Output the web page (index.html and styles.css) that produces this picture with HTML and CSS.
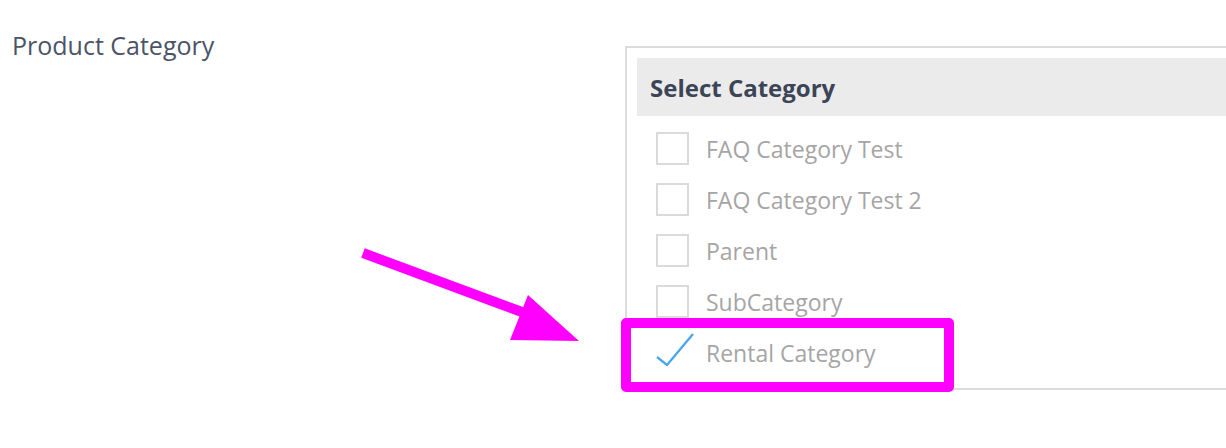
FILE: index.html
```html
<!DOCTYPE html>
<html lang="en">
<head>
  <meta charset="UTF-8">
  <title>Product Category</title>
  <link rel="stylesheet" href="styles.css">
</head>
<body>
  <div class="page">
    <div class="field">
      <label class="field-label">Product Category</label>

      <div class="category-box">
        <div class="category-head">Select Category</div>
        <ul class="category-list">
          <li class="category-item"><span class="check"></span>FAQ Category Test</li>
          <li class="category-item"><span class="check"></span>FAQ Category Test 2</li>
          <li class="category-item"><span class="check"></span>Parent</li>
          <li class="category-item"><span class="check"></span>SubCategory</li>
          <li class="category-item checked">
            <span class="check">
              <svg width="38" height="34" viewBox="0 0 38 34">
                <polyline points="1,25 11,33 37,2" fill="none" stroke="#4aa6ec" stroke-width="2.3"/>
              </svg>
            </span>Rental Category
          </li>
        </ul>
      </div>
    </div>

    <!-- callout -->
    <svg class="callout-arrow" width="240" height="100" viewBox="0 0 240 100">
      <line x1="3" y1="12" x2="170" y2="74" stroke="#ff00ff" stroke-width="10"/>
      <polygon points="168,54 150,99 219,100" fill="#ff00ff"/>
    </svg>
    <div class="callout-box"></div>
  </div>
</body>
</html>
```

FILE: styles.css
```css
body {
  margin: 0;
  background: #fff;
  font-family: "Open Sans", Arial, sans-serif;
}

.page {
  position: relative;
  height: 448px;
}

.field {
  display: flex;
  align-items: flex-start;
  padding-top: 28px;
}

.field-label {
  width: 625px;
  flex-shrink: 0;
  padding-left: 12px;
  box-sizing: border-box;
  font-size: 25px;
  color: #4b5467;
  line-height: 34px;
}

.category-box {
  flex: 1;
  margin-top: 18px;
  border: 2px solid #dcdcdc;
  border-right: none;
  padding: 10px 0 10px 10px;
}

.category-head {
  height: 58px;
  display: flex;
  align-items: center;
  padding-left: 13px;
  background: #ebebeb;
  font-size: 24px;
  font-weight: 700;
  color: #3b4556;
}

.category-list {
  list-style: none;
  margin: 0;
  padding: 7px 0 0 0;
}

.category-item {
  height: 51px;
  display: flex;
  align-items: center;
  padding-left: 19px;
  font-size: 23px;
  color: #a5a5a5;
}

.check {
  width: 33px;
  height: 33px;
  box-sizing: border-box;
  border: 2px solid #dadada;
  margin-right: 17px;
  position: relative;
}

.checked .check {
  border-color: transparent;
}

.checked .check svg {
  position: absolute;
  left: -2px;
  top: -6px;
}

.callout-arrow {
  position: absolute;
  left: 360px;
  top: 241px;
}

.callout-box {
  position: absolute;
  left: 621px;
  top: 318px;
  width: 333px;
  height: 74px;
  box-sizing: border-box;
  border: 10px solid #ff00ff;
  border-radius: 5px;
}
```
